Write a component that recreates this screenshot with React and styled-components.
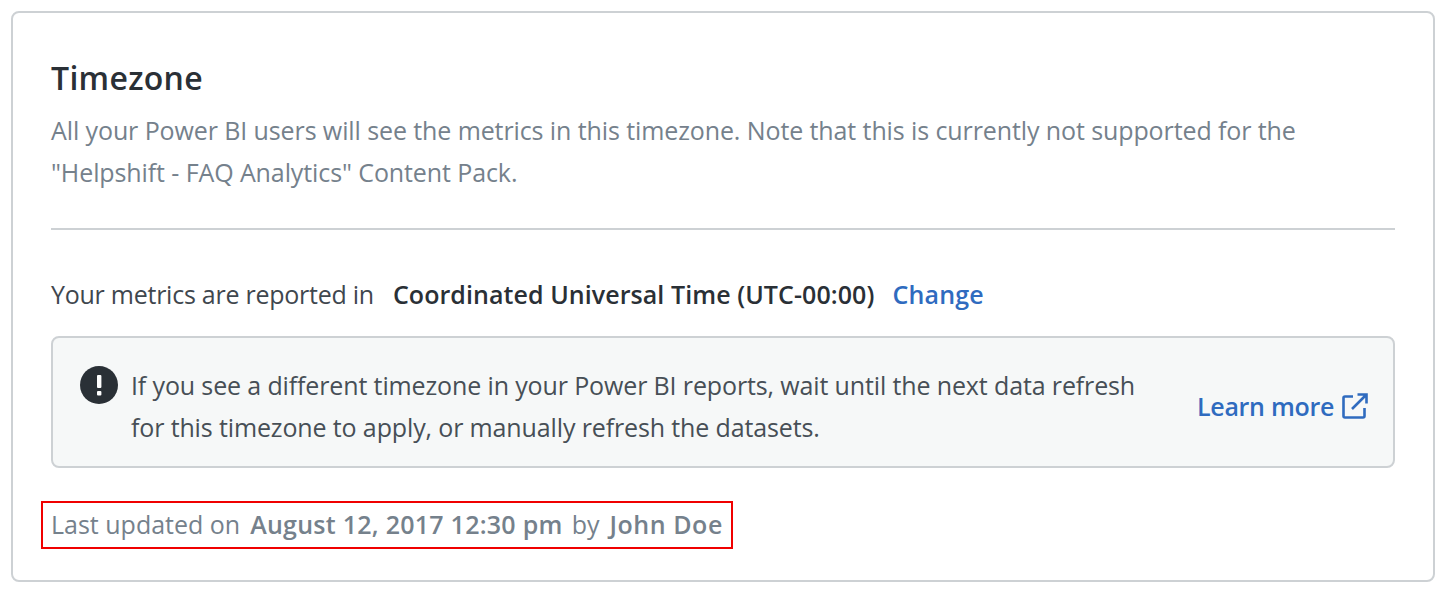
import styled, { createGlobalStyle } from 'styled-components';

const GlobalStyle = createGlobalStyle`
  html, body {
    margin: 0;
    padding: 0;
    background: #fff;
  }
  body {
    font-family: "Open Sans", "Liberation Sans", sans-serif;
  }
`;

const Page = styled.div`
  width: 1448px;
  height: 594px;
  padding: 11px 13px 12px 11px;
  box-sizing: border-box;
`;

const Card = styled.section`
  box-sizing: border-box;
  height: 571px;
  border: 2px solid #cdd1d4;
  border-radius: 8px;
  padding: 45px 38px 0;
`;

const Title = styled.h2`
  margin: 0;
  font-size: 32px;
  line-height: 40px;
  font-weight: 600;
  color: #2a3036;
  letter-spacing: 0.3px;
`;

const Description = styled.p`
  margin: 11px 0 0;
  font-size: 25px;
  line-height: 42px;
  color: #75818c;
  letter-spacing: -0.1px;
`;

const Divider = styled.hr`
  border: 0;
  height: 2px;
  background: #cdd1d4;
  margin: 35px 0 0;
`;

const MetricsRow = styled.div`
  display: flex;
  align-items: center;
  margin-top: 42px;
  height: 44px;
  font-size: 25px;
  color: #3f474e;
  letter-spacing: -0.25px;
`;

const Strong = styled.strong`
  font-weight: 600;
  color: #2a3036;
  margin-left: 19px;
  letter-spacing: 0.07px;
`;

const Link = styled.a`
  color: #2f6bbf;
  font-weight: 600;
  text-decoration: none;
  letter-spacing: 0.2px;
  margin-left: ${(p) => p.$gap || 0}px;
`;

const Notice = styled.div`
  box-sizing: border-box;
  display: flex;
  align-items: center;
  justify-content: space-between;
  height: 132px;
  margin-top: 20px;
  padding: 8px 25px 0 27px;
  background: #f6f8f8;
  border: 2px solid #cdd1d4;
  border-radius: 8px;
`;

const NoticeBody = styled.div`
  display: flex;
  align-items: flex-start;
  gap: 13px;
`;

const NoticeText = styled.p`
  margin: -1px 0 0;
  font-size: 25px;
  line-height: 42px;
  color: #474f56;
  letter-spacing: -0.13px;
`;

const AlertIcon = styled.svg`
  flex: none;
  width: 38px;
  height: 38px;
  margin-top: 1px;
`;

const LearnMore = styled(Link)`
  display: flex;
  align-items: center;
  gap: 8px;
  font-size: 25px;
  letter-spacing: -0.3px;
`;

const Footer = styled.footer`
  display: flex;
  align-items: center;
  box-sizing: border-box;
  height: 48px;
  width: 692px;
  margin: 33px 0 0 -10px;
  padding: 0 8px 2px;
  border: 2px solid #f00000;
  font-size: 25px;
  color: #75818c;
  white-space: pre;
`;

const FooterStrong = styled.strong`
  font-weight: 600;
  margin: 0 9px 0 10px;
  letter-spacing: ${(p) => p.$tracking}px;
`;

export default function App() {
  return (
    <Page>
      <GlobalStyle />
      <Card>
        <Title>Timezone</Title>
        <Description>
          All your Power BI users will see the metrics in this timezone. Note that this is currently not supported for the
          <br />
          "Helpshift - FAQ Analytics" Content Pack.
        </Description>
        <Divider />
        <MetricsRow>
          Your metrics are reported in
          <Strong>Coordinated Universal Time (UTC-00:00)</Strong>
          <Link href="#" $gap={18}>Change</Link>
        </MetricsRow>
        <Notice>
          <NoticeBody>
            <AlertIcon viewBox="0 0 38 38">
              <circle cx="19" cy="19" r="19" fill="#2a3036" />
              <rect x="17" y="9" width="4.4" height="13" rx="1" fill="#fff" />
              <rect x="17" y="25" width="4.4" height="4.4" rx="1" fill="#fff" />
            </AlertIcon>
            <NoticeText>
              If you see a different timezone in your Power BI reports, wait until the next data refresh
              <br />
              for this timezone to apply, or manually refresh the datasets.
            </NoticeText>
          </NoticeBody>
          <LearnMore href="#">
            Learn more
            <svg width="26" height="26" viewBox="0 0 26 26" fill="none" stroke="currentColor" strokeWidth="2.6">
              <path d="M11 3.5H3a1.5 1.5 0 0 0-1.5 1.5v18A1.5 1.5 0 0 0 3 24.500h18a1.500 1.500 0 0 0 1.500-1.500v-8" />
              <path d="M10 16 24 2M15.500 1.500H24.500V10.500" />
            </svg>
          </LearnMore>
        </Notice>
        <Footer>
          Last updated on
          <FooterStrong $tracking={0.26}>August 12, 2017 12:30 pm</FooterStrong>
          by
          <FooterStrong $tracking={0.55}>John Doe</FooterStrong>
        </Footer>
      </Card>
    </Page>
  );
}
